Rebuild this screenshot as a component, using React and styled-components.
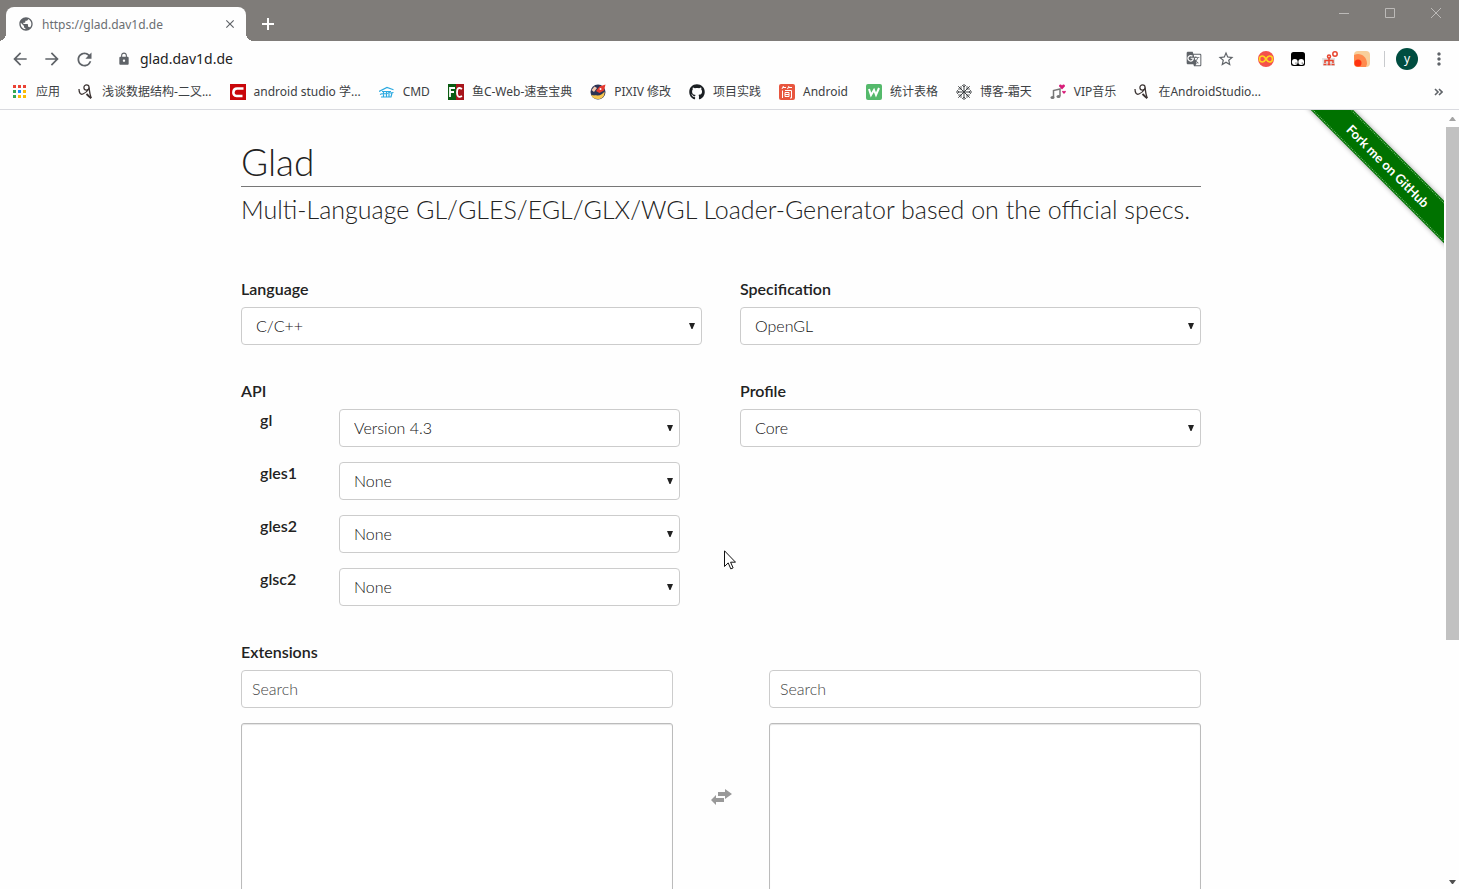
import React from 'react';
import { useState } from 'react';
import styled, { createGlobalStyle } from 'styled-components';
import {
  MdArrowBack,
  MdArrowForward,
  MdClose,
  MdGTranslate,
  MdLock,
  MdMoreVert,
  MdPublic,
  MdRefresh,
  MdStarBorder,
} from 'react-icons/md';
import { FaGithub } from 'react-icons/fa';

const ScribbleIcon = () => (
  <svg width="16" height="16" viewBox="0 0 16 16" fill="none" stroke="#3b3332">
    <path d="M1 5c0 4 1.500 6 4 5 2.500-1 4.500-3 5.500-5" strokeWidth="1.300" />
    <circle cx="8.500" cy="3.500" r="2.600" strokeWidth="1.200" />
    <path d="M11 3.500c.5 4 .8 7 2.200 10.500" strokeWidth="1.300" />
    <path d="M8.500 10c1.500 1.500 3 3 4.700 4.200" strokeWidth="1.800" />
  </svg>
);

const AppsIcon = () => (
  <svg width="16" height="16" viewBox="0 0 16 16">
    {[
      ['#ea4335', '#ea4335', '#ea4335'],
      ['#34a853', '#1a8cff', '#fbbc05'],
      ['#34a853', '#fbbc05', '#fbbc05'],
    ].map((row, y) =>
      row.map((color, x) => (
        <rect key={`${x}${y}`} x={1 + x * 5} y={1 + y * 5} width="3" height="3" fill={color} />
      ))
    )}
  </svg>
);

const RedCIcon = () => (
  <svg width="16" height="16" viewBox="0 0 16 16">
    <rect width="16" height="16" fill="#c9060a" />
    <path d="M13.500 4.500H7c-4.500 0-5 7.500-.5 7.500h6" fill="none" stroke="#fff" strokeWidth="2.600" />
  </svg>
);

const CmdIcon = () => (
  <svg width="16" height="16" viewBox="0 0 16 16" fill="none" stroke="#2ba9e0">
    <path d="M0 7.500 8 3.500l6.500 2.200M3 7.500h9M3.500 10l11-1.500M4.500 8v5.500M2 13h10l1-4M7.500 7v6M10 7v6M1 10.500l2.500-1" strokeWidth="1.200" />
  </svg>
);

const FcIcon = () => (
  <svg width="16" height="16" viewBox="0 0 16 16">
    <rect width="8" height="16" fill="#0b5c12" />
    <rect x="8" width="8" height="16" fill="#a8151b" />
    <path d="M2 13V4h5M2 8h4M14 5c-4-2.500-5 0-5 3.500s1.500 5.500 5 3.500" fill="none" stroke="#fff" strokeWidth="1.800" />
  </svg>
);

const PixivIcon = () => (
  <svg width="16" height="16" viewBox="0 0 16 16">
    <circle cx="8" cy="8" r="7.500" fill="#2c3354" />
    <path d="M1 10.500c2 1.500 4 .5 6 1 3 .5 6-2 7.500-4 .5 5-3 8-7 7.500C4 14.800 2 13.500 1 10.500z" fill="#f7c64f" />
    <path d="M6 7 9.500 2.500l6-2L14 6.500 9.500 9z" fill="#e5392f" />
    <path d="m1.500 6 3-3.500L7 4 4 8z" fill="#f2c9b0" />
    <circle cx="10.500" cy="5" r="1" fill="#fff" />
  </svg>
);

const JianIcon = () => (
  <svg width="16" height="16" viewBox="0 0 16 16">
    <rect width="16" height="16" rx="2" fill="#e8563f" />
    <g fill="none" stroke="#fff">
      <path d="M4.500 2 3 5M4 3.500h3M10 2 8.500 5M9.500 3.500H13M3.500 6.500V14M6 6.500h6.500V14H11" />
      <path d="M6 8.500h4v4H6zM6 10.500h4" />
    </g>
  </svg>
);

const SheetIcon = () => (
  <svg width="16" height="16" viewBox="0 0 16 16">
    <rect width="16" height="16" rx="2" fill="#54b96b" />
    <path d="m3 5 2 6 3-5 2 5 3-7" fill="none" stroke="#fff" strokeWidth="2" />
  </svg>
);

const SnowIcon = () => (
  <svg width="16" height="16" viewBox="0 0 16 16" fill="none" stroke="#3d4043">
    <path d="M8 0v16M0 8h16M2.300 2.300l11.400 11.400M13.700 2.300 2.300 13.700" />
    <path d="m6 1 2 2 2-2M6 15l2-2 2 2M1 6l2 2-2 2M15 6l-2 2 2 2M2 5h3V2M14 5h-3V2M2 11h3v3M14 11h-3v3" strokeWidth=".8" />
  </svg>
);

const MusicIcon = () => (
  <svg width="16" height="16" viewBox="0 0 16 16">
    <path d="M3.500 13V6.500L10 5v7" fill="none" stroke="#777" strokeWidth="1.500" />
    <ellipse cx="2.500" cy="13.500" rx="2" ry="1.500" fill="#777" />
    <ellipse cx="8.500" cy="12.500" rx="2" ry="1.500" fill="#777" />
    <path d="M12 5.500 9.200 2.600c-.9-1.800 1.800-3 2.800-1.100 1-1.900 3.700-.7 2.800 1.100z" fill="#d81b78" />
    <path d="m14 10-1.800-1.900c-.5-1.200 1.100-1.800 1.800-.7.700-1.100 2.300-.5 1.800.7z" fill="#d81b78" />
  </svg>
);

const InfinityIcon = () => (
  <svg width="16" height="16" viewBox="0 0 16 16">
    <circle cx="8" cy="8" r="8" fill="#f4514b" />
    <path
      d="M8 8C6.800 6 5.800 5 4.500 5a3 3 0 0 0 0 6C5.800 11 6.800 10 8 8s2.200-3 3.500-3a3 3 0 0 1 0 6C10.200 11 9.200 10 8 8z"
      fill="none"
      stroke="#ffd51e"
      strokeWidth="1.600"
    />
  </svg>
);

const MonkeyIcon = () => (
  <svg width="16" height="16" viewBox="0 0 16 16">
    <rect x="1" y="1" width="14" height="14" rx="2.500" fill="#000" />
    <circle cx="4.800" cy="11" r="2.900" fill="#fff" />
    <circle cx="11.200" cy="11" r="2.900" fill="#fff" />
    <circle cx="6" cy="12" r=".6" />
    <circle cx="12.200" cy="12" r=".6" />
  </svg>
);

const TreeIcon = () => (
  <svg width="16" height="16" viewBox="0 0 16 16">
    <path d="M0 7h13v8H1z" fill="#e2e2e2" />
    <g fill="none" stroke="#e8452f" strokeWidth="1.500">
      <circle cx="13" cy="3" r="2.200" />
      <circle cx="7" cy="5.500" r="1.500" />
      <path d="M7 7v7M3 12V9.500h8V12M1.500 13.500h3M5.500 13.500h3M9.500 13.500h3" />
    </g>
  </svg>
);

const OrangeIcon = () => (
  <svg width="16" height="16" viewBox="0 0 16 16">
    <rect width="16" height="16" rx="4" fill="#f8cf9b" />
    <path d="M0 4c6-3 13 1 13 9l-1 3H4a4 4 0 0 1-4-4z" fill="#ff8a4d" />
    <circle cx="4" cy="12" r="3.500" fill="#ff3310" />
  </svg>
);

const bookmarks = [
  { id: 0, title: '应用', icon: <AppsIcon /> },
  { id: 1, title: '浅谈数据结构-二叉...', icon: <ScribbleIcon /> },
  { id: 2, title: 'android studio 学...', icon: <RedCIcon /> },
  { id: 3, title: 'CMD', icon: <CmdIcon /> },
  { id: 4, title: '鱼C-Web-速查宝典', icon: <FcIcon /> },
  { id: 5, title: 'PIXIV 修改', icon: <PixivIcon /> },
  { id: 6, title: '项目实践', icon: <FaGithub size={16} color="#1b1f23" /> },
  { id: 7, title: 'Android', icon: <JianIcon /> },
  { id: 8, title: '统计表格', icon: <SheetIcon /> },
  { id: 9, title: '博客-霜天', icon: <SnowIcon /> },
  { id: 10, title: 'VIP音乐', icon: <MusicIcon /> },
  { id: 11, title: '在AndroidStudio...', icon: <ScribbleIcon /> },
];

const extensions = [
  { name: 'Infinity', icon: <InfinityIcon /> },
  { name: 'Tampermonkey', icon: <MonkeyIcon /> },
  { name: 'Site map', icon: <TreeIcon /> },
  { name: 'Color', icon: <OrangeIcon /> },
];

const apis = [
  { id: 'gl', version: 'Version 4.3' },
  { id: 'gles1', version: 'None' },
  { id: 'gles2', version: 'None' },
  { id: 'glsc2', version: 'None' },
];

const SelectField = ({ id, options, ...rest }) => (
  <SelectWrap>
    <Select id={id} {...rest}>
      {options.map((option) => (
        <option key={option}>{option}</option>
      ))}
    </Select>
    <SelectArrow width="6" height="6" viewBox="0 0 6 6">
      <path d="M0 0h6L3.500 6h-1z" fill="#222" />
    </SelectArrow>
  </SelectWrap>
);

const Browser = () => (
  <header>
    <TabStrip>
      <Tab>
        <MdPublic size={16} color="#5f6368" />
        <TabTitle>https://glad.dav1d.de</TabTitle>
        <TabClose aria-label="Close tab">
          <MdClose size={14} />
        </TabClose>
      </Tab>
      <NewTab aria-label="New tab">
        <svg width="12" height="12" viewBox="0 0 12 12">
          <path d="M6 0v12M0 6h12" stroke="#fff" strokeWidth="2" />
        </svg>
      </NewTab>
      <WindowControls>
        <WindowButton aria-label="Minimize">
          <svg width="10" height="10" viewBox="0 0 10 10">
            <path d="M0 5.500h10" stroke="#bcbab8" />
          </svg>
        </WindowButton>
        <WindowButton aria-label="Maximize">
          <svg width="10" height="10" viewBox="0 0 10 10">
            <path d="M.5.500h9v9h-9z" fill="none" stroke="#bcbab8" />
          </svg>
        </WindowButton>
        <WindowButton aria-label="Close">
          <svg width="10" height="10" viewBox="0 0 10 10">
            <path d="m0 0 10 10M10 0 0 10" stroke="#bcbab8" />
          </svg>
        </WindowButton>
      </WindowControls>
    </TabStrip>

    <Toolbar>
      <IconButton aria-label="Back">
        <MdArrowBack size={20} />
      </IconButton>
      <IconButton aria-label="Forward">
        <MdArrowForward size={20} />
      </IconButton>
      <IconButton aria-label="Reload">
        <MdRefresh size={21} />
      </IconButton>
      <AddressBar>
        <MdLock size={14} color="#5f6368" />
        <Address aria-label="Address" defaultValue="glad.dav1d.de" />
      </AddressBar>
      <IconButton aria-label="Translate">
        <MdGTranslate size={16} />
      </IconButton>
      <IconButton aria-label="Bookmark this page">
        <MdStarBorder size={18} />
      </IconButton>
      <ExtensionList>
        {extensions.map((item) => (
          <IconButton key={item.name} aria-label={item.name}>
            {item.icon}
          </IconButton>
        ))}
      </ExtensionList>
      <Divider />
      <Avatar aria-label="Account">y</Avatar>
      <IconButton aria-label="Menu">
        <MdMoreVert size={20} />
      </IconButton>
    </Toolbar>

    <BookmarkBar>
      {bookmarks.map((item) => (
        <Bookmark key={item.id} href="#">
          {item.icon}
          {item.title}
        </Bookmark>
      ))}
      <MoreBookmarks aria-label="More bookmarks">
        <svg width="9" height="8" viewBox="0 0 9 8" fill="none" stroke="#5f6368" strokeWidth="1.600">
          <path d="m1 1 3 3-3 3M5 1l3 3-3 3" />
        </svg>
      </MoreBookmarks>
    </BookmarkBar>
  </header>
);

const App = () => {
  const [search, setSearch] = useState({ available: '', selected: '' });

  const onSearch = (e) => {
    setSearch({ ...search, [e.target.name]: e.target.value });
  };

  return (
    <Window>
      <GlobalStyle />
      <Browser />

      <Viewport>
        <Page>
          <RibbonCorner>
            <Ribbon href="#">Fork me on GitHub</Ribbon>
          </RibbonCorner>

          <Container>
            <Title>Glad</Title>
            <Subtitle>
              Multi-Language GL/GLES/EGL/GLX/WGL Loader-Generator based on the official specs.
            </Subtitle>

            <Columns>
              <div>
                <Label htmlFor="language">Language</Label>
                <SelectField id="language" options={['C/C++']} />
              </div>
              <div>
                <Label htmlFor="specification">Specification</Label>
                <SelectField id="specification" options={['OpenGL']} />
              </div>
            </Columns>

            <Columns>
              <div>
                <GroupTitle>API</GroupTitle>
                <ApiList>
                  {apis.map((api) => (
                    <ApiRow key={api.id}>
                      <ApiLabel htmlFor={api.id}>{api.id}</ApiLabel>
                      <SelectField id={api.id} options={[api.version]} />
                    </ApiRow>
                  ))}
                </ApiList>
              </div>
              <div>
                <Label htmlFor="profile">Profile</Label>
                <SelectField id="profile" options={['Core']} />
              </div>
            </Columns>

            <GroupTitle>Extensions</GroupTitle>
            <Extensions>
              <div>
                <Search
                  name="available"
                  placeholder="Search"
                  aria-label="Search available extensions"
                  value={search.available}
                  onChange={onSearch}
                />
                <ExtensionBox multiple aria-label="Available extensions" />
              </div>
              <Swap aria-label="Move extensions">
                <svg width="22" height="16" viewBox="0 0 22 16" fill="#999">
                  <path d="M8 3h7V0l7 5-7 5V7H8z" />
                  <path d="M14 9v4H6v3l-5-5 5-5v3z" />
                </svg>
              </Swap>
              <div>
                <Search
                  name="selected"
                  placeholder="Search"
                  aria-label="Search selected extensions"
                  value={search.selected}
                  onChange={onSearch}
                />
                <ExtensionBox multiple aria-label="Selected extensions" />
              </div>
            </Extensions>
          </Container>
        </Page>

        <ScrollBar>
          <ScrollArrow width="7" height="4" viewBox="0 0 7 4">
            <path d="M3 0h1l3 4H0z" fill="#a3a3a3" />
          </ScrollArrow>
          <ScrollThumb />
          <ScrollArrow width="7" height="4" viewBox="0 0 7 4">
            <path d="M0 0h7L4 4H3z" fill="#505050" />
          </ScrollArrow>
        </ScrollBar>
      </Viewport>

      <Cursor width="12" height="20" viewBox="0 0 12 20">
        <path
          d="M.5.800v15.700l3.700-3.600 2.600 6 2.300-1-2.500-5.700h4.900z"
          fill="#fff"
          stroke="#111"
        />
      </Cursor>
    </Window>
  );
};

const GlobalStyle = createGlobalStyle`
  * {
    box-sizing: border-box;
  }
  body {
    margin: 0;
    background: #fefefe;
    color: #222;
  }
  button {
    padding: 0;
    border: 0;
    background: none;
  }
`;

const Window = styled.div`
  display: flex;
  flex-direction: column;
  height: 100vh;
  overflow: hidden;
  font-family: 'Noto Sans', 'Noto Sans CJK SC', sans-serif;
`;

const TabStrip = styled.div`
  display: flex;
  align-items: flex-end;
  height: 41px;
  padding-left: 6px;
  background: #7f7c79;
`;
const Tab = styled.div`
  position: relative;
  display: flex;
  align-items: center;
  width: 240px;
  height: 34px;
  padding: 0 9px 0 12px;
  border-radius: 8px 8px 0 0;
  background: #fefefe;

  &::before,
  &::after {
    content: '';
    position: absolute;
    bottom: 0;
    width: 8px;
    height: 8px;
  }
  &::before {
    left: -8px;
    background: radial-gradient(circle at 0 0, transparent 8px, #fefefe 8px);
  }
  &::after {
    right: -8px;
    background: radial-gradient(circle at 100% 0, transparent 8px, #fefefe 8px);
  }
`;
const TabTitle = styled.span`
  flex: 1;
  margin-left: 8px;
  font-size: 12px;
  color: #6b6e72;
`;
const TabClose = styled.button`
  display: flex;
  color: #5f6368;
`;
const NewTab = styled.button`
  display: flex;
  align-items: center;
  justify-content: center;
  width: 28px;
  height: 34px;
  margin-left: 8px;
`;
const WindowControls = styled.div`
  display: flex;
  align-self: flex-start;
  margin-left: auto;
`;
const WindowButton = styled.button`
  display: flex;
  align-items: center;
  justify-content: center;
  width: 46px;
  height: 26px;
`;

const Toolbar = styled.div`
  display: flex;
  align-items: center;
  height: 36px;
  padding: 0 4px;
`;
const IconButton = styled.button`
  display: flex;
  align-items: center;
  justify-content: center;
  flex: none;
  width: 32px;
  height: 28px;
  color: #5f6368;
`;
const AddressBar = styled.div`
  display: flex;
  align-items: center;
  flex: 1;
  gap: 9px;
  padding-left: 17px;
`;
const Address = styled.input`
  flex: 1;
  padding: 0 0 2px;
  border: 0;
  outline: 0;
  background: none;
  font: 14px 'Noto Sans', sans-serif;
  color: #222;
`;
const ExtensionList = styled.div`
  display: flex;
  margin-left: 8px;
`;
const Divider = styled.span`
  width: 1px;
  height: 16px;
  margin: 0 11px 0 6px;
  background: #c8cacd;
`;
const Avatar = styled.button`
  width: 22px;
  height: 22px;
  margin-right: 5px;
  border-radius: 50%;
  background: #004d40;
  font: 12px/20px 'Noto Sans', sans-serif;
  color: #fff;
`;

const BookmarkBar = styled.nav`
  display: flex;
  align-items: center;
  gap: 18px;
  height: 33px;
  padding: 0 16px 2px 12px;
  border-bottom: 1px solid #d9dadf;
`;
const Bookmark = styled.a`
  display: flex;
  align-items: center;
  gap: 8px;
  font-size: 12px;
  line-height: 20px;
  white-space: nowrap;
  color: #3c4043;
  text-decoration: none;
`;
const MoreBookmarks = styled.button`
  display: flex;
  margin-left: auto;
`;

const Viewport = styled.div`
  display: flex;
  flex: 1;
  min-height: 0;
`;
const Page = styled.main`
  position: relative;
  flex: 1;
  padding: 0 2px 0 0;
  overflow: hidden;
  font-family: Lato, sans-serif;
  font-weight: 300;
`;
const Container = styled.div`
  width: 100%;
  max-width: 960px;
  margin: 0 auto;
  padding-top: 30px;
`;
const Title = styled.h1`
  margin: 0;
  padding-bottom: 2px;
  border-bottom: 1px solid #777;
  font-size: 37px;
  font-weight: 300;
  line-height: 44px;
`;
const Subtitle = styled.h2`
  margin: 4px 0 51px;
  font-size: 25px;
  font-weight: 300;
  line-height: 36px;
  white-space: nowrap;
`;
const Columns = styled.div`
  display: grid;
  grid-template-columns: 1fr 1fr;
  gap: 38px;
  margin-bottom: 35px;
`;
const Label = styled.label`
  display: block;
  margin-bottom: 7px;
  font-size: 16px;
  font-weight: 600;
  line-height: 22px;
`;
const GroupTitle = styled(Label).attrs({ as: 'div' })``;

const SelectWrap = styled.div`
  position: relative;
  flex: 1;
`;
const Select = styled.select`
  display: block;
  width: 100%;
  height: 38px;
  padding: 0 14px 2px;
  border: 1px solid #ccc;
  border-radius: 4px;
  appearance: none;
  background: #fff;
  font: 300 16px Lato, sans-serif;
  color: #111;
`;
const SelectArrow = styled.svg`
  position: absolute;
  top: 16px;
  right: 7px;
  pointer-events: none;
`;
const ApiList = styled.div`
  display: flex;
  flex-direction: column;
  gap: 15px;
  padding: 0 22px 0 19px;
`;
const ApiRow = styled.div`
  display: flex;
  align-items: flex-start;
`;
const ApiLabel = styled(Label)`
  width: 79px;
  margin: 0;
`;

const Extensions = styled.div`
  display: grid;
  grid-template-columns: 45% 10% 45%;
`;
const Search = styled.input`
  display: block;
  width: 100%;
  height: 38px;
  margin-bottom: 15px;
  padding: 0 10px 2px;
  border: 1px solid #ccc;
  border-radius: 4px;
  background: #fff;
  font: 300 16px Lato, sans-serif;

  &::placeholder {
    color: #444;
  }
`;
const ExtensionBox = styled.select`
  display: block;
  width: 100%;
  height: 260px;
  border: 1px solid #bbb;
  border-radius: 3px;
  background: #fff;
  box-shadow: inset 0 1px 1px #e4e4e4;
`;
const Swap = styled.button`
  align-self: start;
  display: flex;
  justify-content: center;
  padding-top: 119px;
`;

const RibbonCorner = styled.div`
  position: absolute;
  top: 0;
  right: 0;
  width: 150px;
  height: 150px;
  overflow: hidden;
`;
const Ribbon = styled.a`
  position: absolute;
  top: 41px;
  right: -59px;
  width: 230px;
  height: 30px;
  background: #007200;
  box-shadow: 0 0 5px rgba(0, 0, 0, 0.4);
  outline: 1px dotted #7fba7f;
  outline-offset: -2px;
  font: 700 13px/30px Lato, sans-serif;
  text-align: center;
  text-decoration: none;
  color: #fff;
  transform: rotate(45deg);
`;

const ScrollBar = styled.div`
  display: flex;
  flex-direction: column;
  align-items: center;
  width: 15px;
  padding: 7px 0 5px 2px;
`;
const ScrollArrow = styled.svg`
  flex: none;
`;
const ScrollThumb = styled.div`
  width: 100%;
  height: 513px;
  margin: 6px 0 auto;
  background: #c1c1c1;
`;
const Cursor = styled.svg`
  position: absolute;
  top: 550px;
  left: 724px;
  pointer-events: none;
`;

export default App;
